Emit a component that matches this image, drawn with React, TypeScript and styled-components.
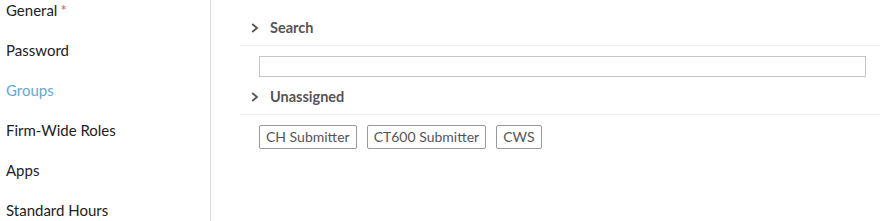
import styled, { createGlobalStyle } from 'styled-components';

const GlobalStyle = createGlobalStyle`
  body {
    margin: 0;
    background: #fff;
    font-family: Lato, "Noto Sans", sans-serif;
  }
`;

const navItems = [
  { label: 'General', required: true },
  { label: 'Password' },
  { label: 'Groups', active: true },
  { label: 'Firm-Wide Roles' },
  { label: 'Apps' },
  { label: 'Standard Hours' },
];

const tags = ['CH Submitter', 'CT600 Submitter', 'CWS'];

const Chevron = () => (
  <svg width="8" height="10" viewBox="0 0 8 10" fill="none">
    <path d="M1.2 1 L6 5 L1.2 9" stroke="#555" strokeWidth="1.8" />
  </svg>
);

const App = () => {
  return (
    <>
      <GlobalStyle />
      <Page>
        <Sidebar>
          <NavList>
            {navItems.map((item) => (
              <NavItem key={item.label} $active={item.active}>
                {item.label}
                {item.required && <Required>*</Required>}
              </NavItem>
            ))}
          </NavList>
        </Sidebar>
        <Main>
          <SectionHeader>
            <Chevron />
            <HeaderText>Search</HeaderText>
          </SectionHeader>
          <SearchInput type="text" />
          <SectionHeader $compact>
            <Chevron />
            <HeaderText>Unassigned</HeaderText>
          </SectionHeader>
          <TagRow>
            {tags.map((t) => (
              <Tag key={t}>{t}</Tag>
            ))}
          </TagRow>
        </Main>
      </Page>
    </>
  );
};

const Page = styled.div`
  display: flex;
  height: 221px;
  overflow: hidden;
`;

const Sidebar = styled.div`
  width: 210px;
  flex-shrink: 0;
  border-right: 1px solid #ddd;
`;

const NavList = styled.ul`
  list-style: none;
  margin: -10px 0 0;
  padding: 0;
`;

const NavItem = styled.li<{ $active?: boolean }>`
  height: 40px;
  line-height: 40px;
  padding-left: 6px;
  font-size: 15px;
  color: ${(p) => (p.$active ? '#6aa5d2' : '#222')};
  white-space: nowrap;
`;

const Required = styled.span`
  color: #d9534f;
  margin-left: 3px;
  font-size: 15px;
`;

const Main = styled.div`
  flex: 1;
  padding: 10px 0 0 29px;
`;

const SectionHeader = styled.div<{ $compact?: boolean }>`
  display: flex;
  align-items: center;
  height: 35px;
  padding-left: 11px;
  margin-top: ${(p) => (p.$compact ? '2px' : '0')};
  border-bottom: 1px solid #eee;
`;

const HeaderText = styled.span`
  margin-left: 11px;
  font-size: 14.5px;
  font-weight: 700;
  color: #555;
`;

const SearchInput = styled.input`
  display: block;
  box-sizing: border-box;
  margin: 10px 0 0 19px;
  width: 607px;
  height: 21px;
  border: 1px solid #c4c4c4;
  padding: 0 4px;
  outline: none;
`;

const TagRow = styled.div`
  display: flex;
  gap: 10px;
  margin: 10px 0 0 19px;
`;

const Tag = styled.span`
  box-sizing: border-box;
  height: 24px;
  line-height: 22px;
  padding: 0 6px;
  border: 1px solid #999;
  border-radius: 2px;
  font-size: 14px;
  color: #555;
  white-space: nowrap;
`;

export default App;
